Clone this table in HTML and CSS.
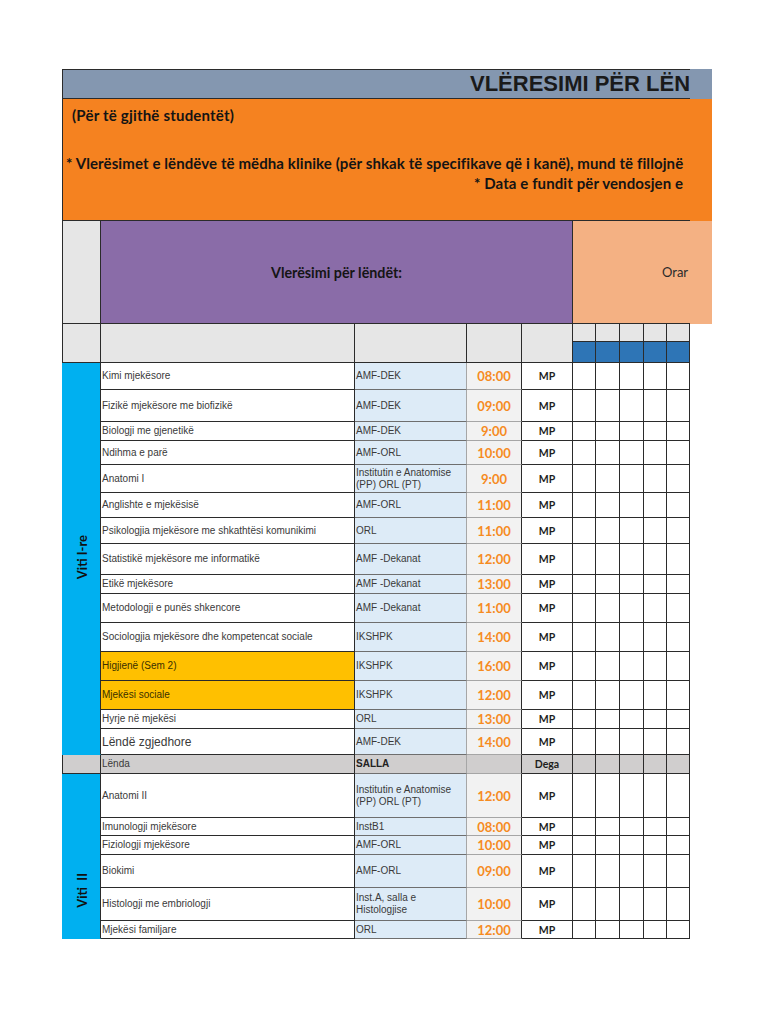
FILE: index.html
```html
<!DOCTYPE html>
<html lang="sq">
<head>
<meta charset="utf-8">
<title>Vlerësimi për lëndët</title>
<link rel="stylesheet" href="styles.css">
</head>
<body>
<div class="page">
  <div class="band band-title">
    <div class="sheet"><h1 class="title">VLËRESIMI PËR LËNDËT</h1></div>
    <div class="tail"></div>
  </div>
  <div class="band band-note">
    <div class="sheet">
      <p class="note note-scope">(Për të gjithë studentët)</p>
      <p class="note note-line1">* Vlerësimet e lëndëve të mëdha klinike (për shkak të specifikave që i kanë), mund të fillojnë</p>
      <p class="note note-line2">* Data e fundit për vendosjen e</p>
    </div>
    <div class="tail"></div>
  </div>
  <div class="band band-head">
    <div class="corner"></div>
    <div class="subjects">Vlerësimi për lëndët:</div>
    <div class="schedule">Orar</div>
    <div class="tail"></div>
  </div>
  <table class="grid">
    <colgroup>
      <col class="c-yr"><col class="c-subj"><col class="c-room"><col class="c-time"><col class="c-dept">
      <col class="c-s23"><col class="c-s24"><col class="c-s24"><col class="c-s23"><col class="c-s23">
    </colgroup>
    <tbody>
      <tr class="h18">
        <td class="yr gray" rowspan="2"></td><td class="gray" rowspan="2"></td><td class="gray" rowspan="2"></td><td class="gray" rowspan="2"></td><td class="gray" rowspan="2"></td>
        <td class="gray"></td><td class="gray"></td><td class="gray"></td><td class="gray"></td><td class="gray"></td>
      </tr>
      <tr class="h21">
        <td class="blue"></td><td class="blue"></td><td class="blue"></td><td class="blue"></td><td class="blue"></td>
      </tr>
      <tr class="h27">
        <td class="yr year" rowspan="15"><span class="vlabel">Viti I-re</span></td>
        <td class="subj">Kimi mjekësore</td><td class="room">AMF-DEK</td><td class="time">08:00</td><td class="dept">MP</td>
        <td></td><td></td><td></td><td></td><td></td>
      </tr>
      <tr class="h32">
        <td class="subj">Fizikë mjekësore me biofizikë</td><td class="room">AMF-DEK</td><td class="time">09:00</td><td class="dept">MP</td>
        <td></td><td></td><td></td><td></td><td></td>
      </tr>
      <tr class="h19">
        <td class="subj">Biologji me gjenetikë</td><td class="room">AMF-DEK</td><td class="time">9:00</td><td class="dept">MP</td>
        <td></td><td></td><td></td><td></td><td></td>
      </tr>
      <tr class="h24">
        <td class="subj">Ndihma e parë</td><td class="room">AMF-ORL</td><td class="time">10:00</td><td class="dept">MP</td>
        <td></td><td></td><td></td><td></td><td></td>
      </tr>
      <tr class="h28">
        <td class="subj">Anatomi I</td><td class="room">Institutin e Anatomise (PP) ORL (PT)</td><td class="time">9:00</td><td class="dept">MP</td>
        <td></td><td></td><td></td><td></td><td></td>
      </tr>
      <tr class="h25">
        <td class="subj">Anglishte e mjekësisë</td><td class="room">AMF-ORL</td><td class="time">11:00</td><td class="dept">MP</td>
        <td></td><td></td><td></td><td></td><td></td>
      </tr>
      <tr class="h26">
        <td class="subj">Psikologjia mjekësore me shkathtësi komunikimi</td><td class="room">ORL</td><td class="time">11:00</td><td class="dept">MP</td>
        <td></td><td></td><td></td><td></td><td></td>
      </tr>
      <tr class="h31">
        <td class="subj">Statistikë mjekësore me informatikë</td><td class="room">AMF -Dekanat</td><td class="time">12:00</td><td class="dept">MP</td>
        <td></td><td></td><td></td><td></td><td></td>
      </tr>
      <tr class="h19">
        <td class="subj">Etikë mjekësore</td><td class="room">AMF -Dekanat</td><td class="time">13:00</td><td class="dept">MP</td>
        <td></td><td></td><td></td><td></td><td></td>
      </tr>
      <tr class="h29">
        <td class="subj">Metodologji e punës shkencore</td><td class="room">AMF -Dekanat</td><td class="time">11:00</td><td class="dept">MP</td>
        <td></td><td></td><td></td><td></td><td></td>
      </tr>
      <tr class="h29">
        <td class="subj">Sociologjia mjekësore dhe kompetencat sociale</td><td class="room">IKSHPK</td><td class="time">14:00</td><td class="dept">MP</td>
        <td></td><td></td><td></td><td></td><td></td>
      </tr>
      <tr class="h29">
        <td class="subj marked">Higjienë (Sem 2)</td><td class="room">IKSHPK</td><td class="time">16:00</td><td class="dept">MP</td>
        <td></td><td></td><td></td><td></td><td></td>
      </tr>
      <tr class="h29">
        <td class="subj marked">Mjekësi sociale</td><td class="room">IKSHPK</td><td class="time">12:00</td><td class="dept">MP</td>
        <td></td><td></td><td></td><td></td><td></td>
      </tr>
      <tr class="h19">
        <td class="subj">Hyrje në mjekësi</td><td class="room">ORL</td><td class="time">13:00</td><td class="dept">MP</td>
        <td></td><td></td><td></td><td></td><td></td>
      </tr>
      <tr class="h26">
        <td class="subj subj-lg">Lëndë zgjedhore</td><td class="room">AMF-DEK</td><td class="time">14:00</td><td class="dept">MP</td>
        <td></td><td></td><td></td><td></td><td></td>
      </tr>
      <tr class="h19 sub-head">
        <td class="yr"></td><td class="subj">Lënda</td><td class="room strong">SALLA</td><td class="time"></td><td class="dept">Dega</td>
        <td></td><td></td><td></td><td></td><td></td>
      </tr>
      <tr class="h44">
        <td class="yr year year-2" rowspan="6"><span class="vlabel">Viti&nbsp;&nbsp;II</span></td>
        <td class="subj">Anatomi II</td><td class="room">Institutin e Anatomise (PP) ORL (PT)</td><td class="time">12:00</td><td class="dept">MP</td>
        <td></td><td></td><td></td><td></td><td></td>
      </tr>
      <tr class="h18">
        <td class="subj">Imunologji mjekësore</td><td class="room">InstB1</td><td class="time">08:00</td><td class="dept">MP</td>
        <td></td><td></td><td></td><td></td><td></td>
      </tr>
      <tr class="h19">
        <td class="subj">Fiziologji mjekësore</td><td class="room">AMF-ORL</td><td class="time">10:00</td><td class="dept">MP</td>
        <td></td><td></td><td></td><td></td><td></td>
      </tr>
      <tr class="h33">
        <td class="subj">Biokimi</td><td class="room">AMF-ORL</td><td class="time">09:00</td><td class="dept">MP</td>
        <td></td><td></td><td></td><td></td><td></td>
      </tr>
      <tr class="h33">
        <td class="subj">Histologji me embriologji</td><td class="room">Inst.A, salla e Histologjise</td><td class="time">10:00</td><td class="dept">MP</td>
        <td></td><td></td><td></td><td></td><td></td>
      </tr>
      <tr class="h18">
        <td class="subj">Mjekësi familjare</td><td class="room">ORL</td><td class="time">12:00</td><td class="dept">MP</td>
        <td></td><td></td><td></td><td></td><td></td>
      </tr>
    </tbody>
  </table>
</div>
</body>
</html>
```

FILE: styles.css
```css
* { box-sizing: border-box; }

body {
  margin: 0;
  background: #ffffff;
  font-family: "Liberation Sans", Arial, sans-serif;
  color: #333333;
}

.page {
  width: 768px;
  padding: 69px 0 0 62px;
}

/* ---------- header bands ---------- */
.band {
  display: flex;
  width: 650px;
}

.band .sheet {
  width: 628px;
  flex: none;
  overflow: hidden;
  white-space: nowrap;
  border-left: 1px solid #2b2b2b;
}

.band .tail { flex: 1; }

.band-title {
  height: 30px;
  background: #8497b0;
}

.band-title .sheet {
  border-top: 1px solid #2b2b2b;
  border-bottom: 1px solid #2b2b2b;
}

.title {
  margin: 0;
  padding-left: 407px;
  font: bold 22px/28px "Liberation Sans", Arial, sans-serif;
  color: #1a1a1a;
}

.band-note {
  height: 122px;
  background: #f58220;
}

.band-note .sheet {
  border-bottom: 1px solid #2b2b2b;
  padding-top: 6px;
}

.note {
  margin: 0;
  font: bold 15px/20px Lato, "Open Sans", sans-serif;
  letter-spacing: 0.1px;
  color: #141414;
}

.note-scope { padding-left: 9px; letter-spacing: 0.2px; }
.note-line1 { margin-top: 28px; padding-left: 3px; }
.note-line2 { padding-left: 411px; }

.band-head {
  height: 103px;
  background: #f4b183;
}

.band-head .corner {
  width: 39px;
  background: #e6e6e6;
  border-left: 1px solid #2b2b2b;
  border-right: 1px solid #2b2b2b;
  border-bottom: 1px solid #2b2b2b;
}

.band-head .subjects {
  width: 472px;
  background: #8a6ca8;
  border-right: 1px solid #2b2b2b;
  border-bottom: 1px solid #2b2b2b;
  display: flex;
  align-items: center;
  justify-content: center;
  font: bold 14.3px Lato, "Open Sans", sans-serif;
  color: #151515;
}

.band-head .schedule {
  width: 117px;
  border-bottom: 1px solid #2b2b2b;
  overflow: hidden;
  white-space: nowrap;
  display: flex;
  align-items: center;
  padding-left: 89px;
  font: 13px Lato, "Open Sans", sans-serif;
  color: #2a2a2a;
}

/* ---------- table ---------- */
.grid {
  width: 628px;
  table-layout: fixed;
  border-collapse: separate;
  border-spacing: 0;
}

.c-yr { width: 39px; }
.c-subj { width: 254px; }
.c-room { width: 112px; }
.c-time { width: 55px; }
.c-dept { width: 51px; }
.c-s23 { width: 23px; }
.c-s24 { width: 24px; }

.grid td {
  padding: 0 1px;
  border-right: 1px solid #2b2b2b;
  border-bottom: 1px solid #2b2b2b;
  background: #ffffff;
  font-size: 10px;
  line-height: 12px;
  color: #3a3a3a;
  vertical-align: middle;
  overflow: hidden;
}

.grid td.yr { border-left: 1px solid #2b2b2b; }

.h18 { height: 18px; }
.h19 { height: 19px; }
.h21 { height: 21px; }
.h24 { height: 24px; }
.h25 { height: 25px; }
.h26 { height: 26px; }
.h27 { height: 27px; }
.h28 { height: 28px; }
.h29 { height: 29px; }
.h31 { height: 31px; }
.h32 { height: 32px; }
.h33 { height: 33px; }
.h44 { height: 44px; }

.grid td.gray { background: #e6e6e6; }
.grid td.blue { background: #2e75b6; }

.grid td.subj { white-space: nowrap; }
.grid td.subj-lg { font-size: 12px; }
.grid td.marked { background: #ffc000; color: #3a3000; }

.grid td.room {
  background: #ddebf7;
  border-right-color: #a6a6a6;
  border-bottom-color: #6e6e6e;
}

.grid td.time {
  background: #f2f2f2;
  border-bottom-color: #a6a6a6;
  text-align: center;
  font: bold 13px/14px Lato, "Open Sans", sans-serif;
  color: #f68b1f;
}

.grid td.dept {
  text-align: center;
  font: bold 10.5px/12px Lato, "Open Sans", sans-serif;
  color: #1e1e1e;
}

.grid td.year {
  background: #00b0f0;
  border-left-color: #00b0f0;
  border-bottom-color: #00b0f0;
  text-align: center;
}

.grid td.year-2 { padding-top: 72px; }

.vlabel {
  display: inline-block;
  writing-mode: vertical-rl;
  transform: rotate(180deg);
  white-space: nowrap;
  font: bold 13px/16px Lato, "Open Sans", sans-serif;
  color: #111111;
}

.sub-head td,
.grid .sub-head td.time,
.grid .sub-head td.room { background: #d0cece; }

.grid td.strong { font-weight: bold; color: #222222; }
```
